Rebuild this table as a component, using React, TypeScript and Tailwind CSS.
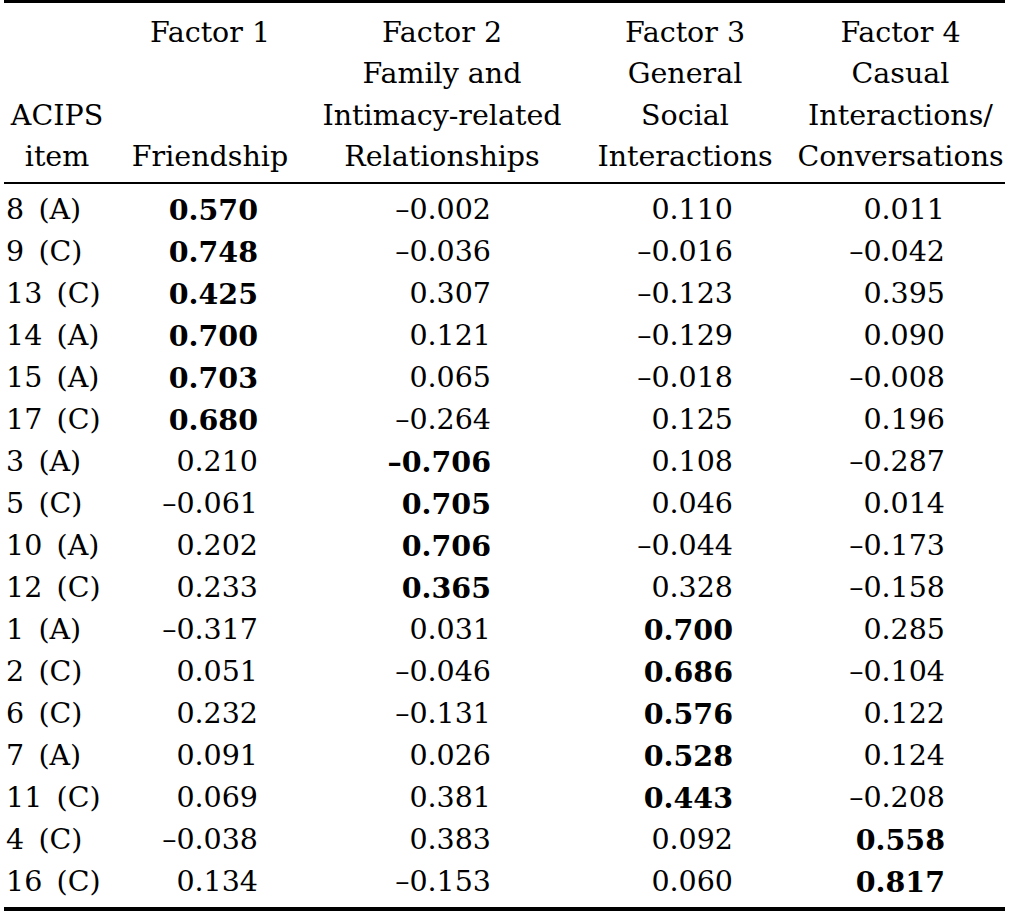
import React from 'react';

type Row = { item: string; values: string[]; bold: number };

const rows: Row[] = [
  { item: '8 (A)', values: ['0.570', '–0.002', '0.110', '0.011'], bold: 0 },
  { item: '9 (C)', values: ['0.748', '–0.036', '–0.016', '–0.042'], bold: 0 },
  { item: '13 (C)', values: ['0.425', '0.307', '–0.123', '0.395'], bold: 0 },
  { item: '14 (A)', values: ['0.700', '0.121', '–0.129', '0.090'], bold: 0 },
  { item: '15 (A)', values: ['0.703', '0.065', '–0.018', '–0.008'], bold: 0 },
  { item: '17 (C)', values: ['0.680', '–0.264', '0.125', '0.196'], bold: 0 },
  { item: '3 (A)', values: ['0.210', '–0.706', '0.108', '–0.287'], bold: 1 },
  { item: '5 (C)', values: ['–0.061', '0.705', '0.046', '0.014'], bold: 1 },
  { item: '10 (A)', values: ['0.202', '0.706', '–0.044', '–0.173'], bold: 1 },
  { item: '12 (C)', values: ['0.233', '0.365', '0.328', '–0.158'], bold: 1 },
  { item: '1 (A)', values: ['–0.317', '0.031', '0.700', '0.285'], bold: 2 },
  { item: '2 (C)', values: ['0.051', '–0.046', '0.686', '–0.104'], bold: 2 },
  { item: '6 (C)', values: ['0.232', '–0.131', '0.576', '0.122'], bold: 2 },
  { item: '7 (A)', values: ['0.091', '0.026', '0.528', '0.124'], bold: 2 },
  { item: '11 (C)', values: ['0.069', '0.381', '0.443', '–0.208'], bold: 2 },
  { item: '4 (C)', values: ['–0.038', '0.383', '0.092', '0.558'], bold: 3 },
  { item: '16 (C)', values: ['0.134', '–0.153', '0.060', '0.817'], bold: 3 },
];

const cols = 'grid grid-cols-[106px_200px_264px_222px_209px]';
const valuePad = ['pr-[52px]', 'pr-[83px]', 'pr-[63px]', 'pr-[60px]'];

export default function App() {
  return (
    <div className="min-h-[913px] w-[1011px] bg-white text-black font-['DejaVu_Serif',serif] text-[28.5px] leading-[41.3px]">
      <div className="ml-[4px] w-[1001px] border-t-[3px] border-black">
        <div className={`${cols} pt-[9px] pb-[5px] text-center border-b-2 border-black`}>
          <div className="flex flex-col">
            <span>&nbsp;</span>
            <span>&nbsp;</span>
            <span>ACIPS</span>
            <span>item</span>
          </div>
          <div className="flex flex-col">
            <span>Factor 1</span>
            <span>&nbsp;</span>
            <span>&nbsp;</span>
            <span>Friendship</span>
          </div>
          <div className="flex flex-col">
            <span>Factor 2</span>
            <span>Family and</span>
            <span>Intimacy-related</span>
            <span>Relationships</span>
          </div>
          <div className="flex flex-col">
            <span>Factor 3</span>
            <span>General</span>
            <span>Social</span>
            <span>Interactions</span>
          </div>
          <div className="flex flex-col">
            <span>Factor 4</span>
            <span>Casual</span>
            <span>Interactions/</span>
            <span>Conversations</span>
          </div>
        </div>

        <div className="pt-[5px] pb-[4px] border-b-[4px] border-black leading-[42px]">
          {rows.map((r) => (
            <div key={r.item} className={cols}>
              <div className="pl-[2px] whitespace-pre">{r.item.replace(' ', '\u2002')}</div>
              {r.values.map((v, i) => (
                <div key={i} className={`text-right ${valuePad[i]} ${i === r.bold ? 'font-bold' : ''}`}>
                  {v}
                </div>
              ))}
            </div>
          ))}
        </div>
      </div>
    </div>
  );
}
